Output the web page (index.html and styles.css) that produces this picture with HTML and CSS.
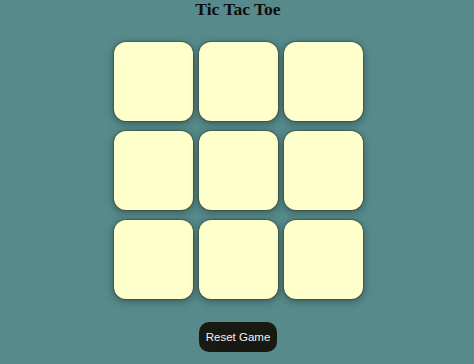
FILE: index.html
```html
<!DOCTYPE html>
<html>
<head>
<meta charset="utf-8">
<title>Tic Tac Toe</title>
<link rel="stylesheet" href="styles.css">
</head>
<body>
<main class="page">
  <h1 class="title">Tic Tac Toe</h1>
  <div class="game">
    <button class="box"></button>
    <button class="box"></button>
    <button class="box"></button>
    <button class="box"></button>
    <button class="box"></button>
    <button class="box"></button>
    <button class="box"></button>
    <button class="box"></button>
    <button class="box"></button>
  </div>
  <button class="reset-btn">Reset Game</button>
</main>
</body>
</html>
```
FILE: styles.css
```css
html, body {
  margin: 0;
  padding: 0;
}
body {
  background-color: #568a8b;
  width: 474px;
  height: 364px;
  overflow: hidden;
}
.page {
  display: flex;
  flex-direction: column;
  align-items: center;
  padding-left: 2px;
}
.title {
  margin: 0;
  height: 19px;
  font-family: "Liberation Serif", "Times New Roman", serif;
  font-weight: bold;
  font-size: 17.5px;
  line-height: 19px;
  color: #0d0d0d;
}
.game {
  margin-top: 23px;
  display: grid;
  grid-template-columns: repeat(3, 79px);
  grid-auto-rows: 79px;
  column-gap: 6px;
  row-gap: 10px;
}
.box {
  border: none;
  border-radius: 12px;
  background-color: #ffffcb;
  box-shadow: 0 2px 8px rgba(0, 0, 0, 0.38), 0 0 1px 1px rgba(60, 70, 40, 0.45);
  padding: 0;
}
.reset-btn {
  margin-top: 23px;
  width: 78px;
  height: 30px;
  border: none;
  border-radius: 10px;
  background-color: #191913;
  color: #f2f2f2;
  font-family: "Liberation Sans", Arial, sans-serif;
  font-size: 11.5px;
  padding: 0;
}
```
